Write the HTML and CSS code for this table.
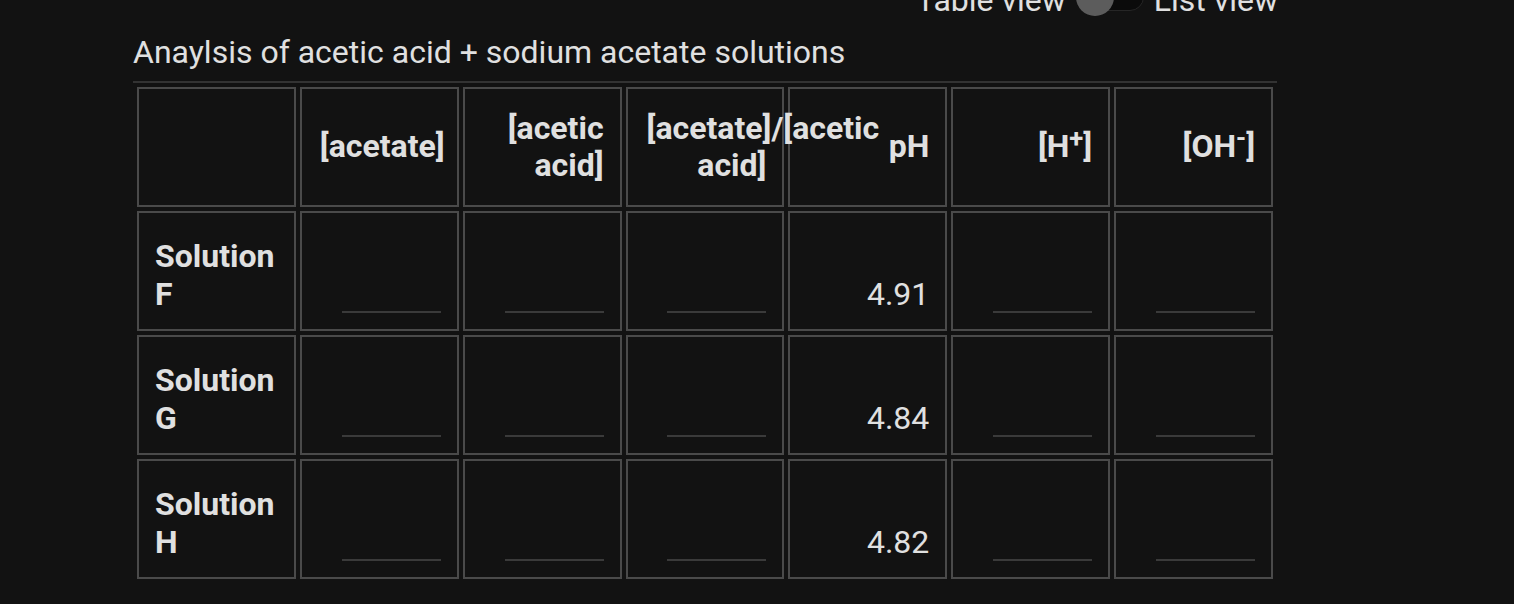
FILE: index.html
```html
<!DOCTYPE html>
<html lang="en">
<head>
<meta charset="utf-8">
<title>Anaylsis of acetic acid + sodium acetate solutions</title>
<link rel="stylesheet" href="styles.css">
</head>
<body>
<div class="page">
  <div class="view-toggle">
    <span class="view-label">Table view</span>
    <span class="switch"><span class="switch-thumb"></span></span>
    <span class="view-label view-label-right">List view</span>
  </div>
  <h1 class="title">Anaylsis of acetic acid + sodium acetate solutions</h1>
  <div class="grid">
    <div class="cell head"></div>
    <div class="cell head head-tight"><div class="head-text">[acetate]</div></div>
    <div class="cell head"><div class="head-text">[acetic acid]</div></div>
    <div class="cell head head-ratio"><div class="head-text"><span class="nowrap">[acetate]/[acetic</span> acid]</div></div>
    <div class="cell head"><div class="head-text">pH</div></div>
    <div class="cell head"><div class="head-text">[H<sup>+</sup>]</div></div>
    <div class="cell head"><div class="head-text">[OH<sup>-</sup>]</div></div>

    <div class="cell row-label">Solution F</div>
    <div class="cell data"><input class="field" type="text" aria-label="[acetate] Solution F"></div>
    <div class="cell data"><input class="field" type="text" aria-label="[acetic acid] Solution F"></div>
    <div class="cell data"><input class="field" type="text" aria-label="ratio Solution F"></div>
    <div class="cell data value">4.91</div>
    <div class="cell data"><input class="field" type="text" aria-label="[H+] Solution F"></div>
    <div class="cell data"><input class="field" type="text" aria-label="[OH-] Solution F"></div>

    <div class="cell row-label">Solution G</div>
    <div class="cell data"><input class="field" type="text" aria-label="[acetate] Solution G"></div>
    <div class="cell data"><input class="field" type="text" aria-label="[acetic acid] Solution G"></div>
    <div class="cell data"><input class="field" type="text" aria-label="ratio Solution G"></div>
    <div class="cell data value">4.84</div>
    <div class="cell data"><input class="field" type="text" aria-label="[H+] Solution G"></div>
    <div class="cell data"><input class="field" type="text" aria-label="[OH-] Solution G"></div>

    <div class="cell row-label">Solution H</div>
    <div class="cell data"><input class="field" type="text" aria-label="[acetate] Solution H"></div>
    <div class="cell data"><input class="field" type="text" aria-label="[acetic acid] Solution H"></div>
    <div class="cell data"><input class="field" type="text" aria-label="ratio Solution H"></div>
    <div class="cell data value">4.82</div>
    <div class="cell data"><input class="field" type="text" aria-label="[H+] Solution H"></div>
    <div class="cell data"><input class="field" type="text" aria-label="[OH-] Solution H"></div>
  </div>
</div>
</body>
</html>
```
FILE: styles.css
```css
html, body {
  margin: 0;
  padding: 0;
  background: #121212;
}

body {
  font-family: Roboto, "Liberation Sans", Arial, sans-serif;
  color: #e0e0e0;
  overflow: hidden;
}

.page {
  width: 1144px;
  margin: -18px 0 0 133px;
}

.view-toggle {
  display: flex;
  justify-content: flex-end;
  align-items: center;
  height: 38px;
}

.view-label {
  font-size: 32px;
  line-height: 37.5px;
  color: #e0e0e0;
}

.view-label-right {
  margin-right: -1px;
}

.switch {
  position: relative;
  width: 68px;
  height: 28px;
  margin: 0 10px 9px 10px;
  border-radius: 14px;
  background: #0b0b0b;
  box-sizing: border-box;
  border: 1px solid #262626;
}

.switch-thumb {
  position: absolute;
  left: -1px;
  top: -6px;
  width: 38px;
  height: 38px;
  border-radius: 50%;
  background: #5c5c5c;
}

.title {
  margin: 14px 0 9.5px;
  font-size: 32px;
  line-height: 37.5px;
  font-weight: 400;
  color: #e0e0e0;
}

.grid {
  display: grid;
  grid-template-columns: repeat(7, minmax(0, 1fr));
  grid-auto-rows: 120px;
  gap: 4px;
  padding: 4px;
  border-top: 2px solid #333333;
  box-sizing: border-box;
}

.cell {
  box-sizing: border-box;
  border: 2px solid #4a4a4a;
  min-width: 0;
  font-size: 32px;
  line-height: 37.5px;
}

.head {
  display: flex;
  flex-direction: column;
  justify-content: center;
  padding: 0 16px;
  font-weight: 700;
}

.head-tight {
  padding-right: 12px;
}

.head-ratio {
  padding-left: 19px;
  z-index: 1;
}

.head-text {
  text-align: right;
  overflow: visible;
}

.nowrap {
  white-space: nowrap;
}

.head-text sup {
  font-size: 0.8em;
  line-height: 0;
  vertical-align: 0.38em;
}

.row-label {
  display: flex;
  flex-direction: column;
  justify-content: flex-end;
  padding: 16px;
  font-weight: 700;
}

.data {
  display: flex;
  flex-direction: column;
  justify-content: flex-end;
  align-items: flex-end;
  padding: 16px;
}

.value {
  font-weight: 400;
  text-align: right;
}

.field {
  width: 99px;
  height: 37px;
  margin: 0;
  padding: 0;
  border: 0;
  border-bottom: 2px solid #3a3a3a;
  background: transparent;
  color: #e0e0e0;
  font-family: inherit;
  font-size: 32px;
  box-sizing: border-box;
  outline: none;
}
```
